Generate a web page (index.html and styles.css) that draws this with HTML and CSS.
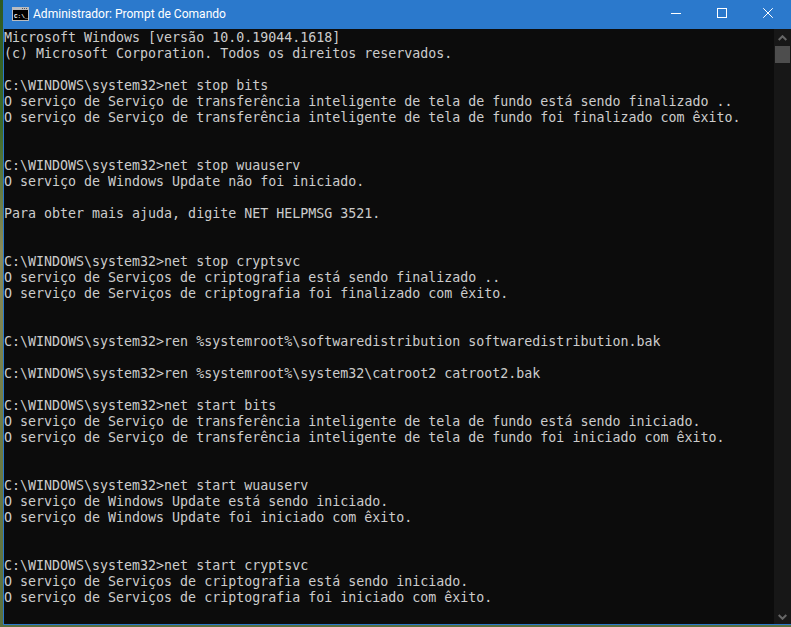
FILE: index.html
```html
<!DOCTYPE html>
<html lang="pt-BR">
<head>
<meta charset="utf-8">
<title>Administrador: Prompt de Comando</title>
<link rel="stylesheet" href="styles.css">
</head>
<body>
<div class="window">
  <header class="titlebar">
    <svg class="app-icon" width="17" height="14" viewBox="0 0 17 14">
      <rect x="0" y="0" width="17" height="14" fill="#b9bcc0"/>
      <rect x="1" y="3" width="15" height="10" fill="#000"/>
      <rect x="10" y="1" width="1" height="1" fill="#555"/>
      <rect x="12" y="1" width="1" height="1" fill="#555"/>
      <rect x="14" y="1" width="1" height="1" fill="#555"/>
      <text x="2" y="11" class="app-icon-text">C:\_</text>
    </svg>
    <span class="title">Administrador: Prompt de Comando</span>
    <div class="controls">
      <button class="control" aria-label="Minimizar">
        <svg width="10" height="10" viewBox="0 0 10 10"><path d="M0 5.5H10" stroke="#fff" fill="none"/></svg>
      </button>
      <button class="control" aria-label="Maximizar">
        <svg width="10" height="10" viewBox="0 0 10 10"><rect x=".5" y=".5" width="9" height="9" stroke="#fff" fill="none"/></svg>
      </button>
      <button class="control" aria-label="Fechar">
        <svg width="10" height="10" viewBox="0 0 10 10"><path d="M.2 .2L9.8 9.8M9.8 .2L.2 9.8" stroke="#fff" fill="none"/></svg>
      </button>
    </div>
  </header>
  <div class="body">
<pre class="console">Microsoft Windows [versão 10.0.19044.1618]
(c) Microsoft Corporation. Todos os direitos reservados.

C:\WINDOWS\system32&gt;net stop bits
O serviço de Serviço de transferência inteligente de tela de fundo está sendo finalizado ..
O serviço de Serviço de transferência inteligente de tela de fundo foi finalizado com êxito.


C:\WINDOWS\system32&gt;net stop wuauserv
O serviço de Windows Update não foi iniciado.

Para obter mais ajuda, digite NET HELPMSG 3521.


C:\WINDOWS\system32&gt;net stop cryptsvc
O serviço de Serviços de criptografia está sendo finalizado ..
O serviço de Serviços de criptografia foi finalizado com êxito.


C:\WINDOWS\system32&gt;ren %systemroot%\softwaredistribution softwaredistribution.bak

C:\WINDOWS\system32&gt;ren %systemroot%\system32\catroot2 catroot2.bak

C:\WINDOWS\system32&gt;net start bits
O serviço de Serviço de transferência inteligente de tela de fundo está sendo iniciado.
O serviço de Serviço de transferência inteligente de tela de fundo foi iniciado com êxito.


C:\WINDOWS\system32&gt;net start wuauserv
O serviço de Windows Update está sendo iniciado.
O serviço de Windows Update foi iniciado com êxito.


C:\WINDOWS\system32&gt;net start cryptsvc
O serviço de Serviços de criptografia está sendo iniciado.
O serviço de Serviços de criptografia foi iniciado com êxito.
</pre>
    <div class="scrollbar">
      <svg class="arrow" width="9" height="6" viewBox="0 0 9 6"><path d="M.7 5L4.5 1.2L8.3 5" stroke="#666" stroke-width="2" fill="none"/></svg>
      <div class="thumb"></div>
      <svg class="arrow arrow-down" width="9" height="6" viewBox="0 0 9 6"><path d="M.7 1L4.5 4.8L8.3 1" stroke="#666" stroke-width="2" fill="none"/></svg>
    </div>
  </div>
</div>
</body>
</html>
```
FILE: styles.css
```css
html, body {
  margin: 0;
  height: 100%;
}
body {
  overflow: hidden;
  background: linear-gradient(180deg, #2f5a22 0%, #3e6a2a 20%, #8a8a5a 40%, #6d7a45 70%, #5a7040 100%);
  padding: 0 0 2px 3px;
  box-sizing: border-box;
}
.window {
  height: 100%;
  display: flex;
  flex-direction: column;
  border-left: 1px solid #2b79cc;
  border-bottom: 1px solid #2b79cc;
  box-sizing: border-box;
}
.titlebar {
  flex: 0 0 29px;
  display: flex;
  align-items: center;
  background: #2b79cc;
  color: #fff;
  padding-left: 8px;
  margin-left: -1px;
}
.app-icon {
  margin: 0 0 1px 1px;
}
.app-icon-text {
  font: bold 6px "Liberation Mono", monospace;
  fill: #fff;
}
.title {
  margin-left: 4px;
  font: 12.05px Roboto, sans-serif;
  padding-bottom: 1px;
}
.controls {
  margin-left: auto;
  display: flex;
}
.control {
  width: 46px;
  height: 29px;
  padding: 0 0 3px;
  border: 0;
  background: none;
  display: flex;
  align-items: center;
  justify-content: center;
}
.body {
  flex: 1;
  min-height: 0;
  display: flex;
  background: #0c0c0c;
}
.console {
  flex: 1;
  margin: 0;
  padding-top: 1px;
  overflow: hidden;
  color: #cccccc;
  font: 13.3px/16px "DejaVu Sans Mono", monospace;
}
.scrollbar {
  flex: 0 0 17px;
  display: flex;
  flex-direction: column;
  align-items: center;
  background: #171717;
}
.arrow {
  margin-top: 6px;
}
.thumb {
  width: 15px;
  height: 17px;
  margin-top: 5px;
  background: #4d4d4d;
}
.arrow-down {
  margin-top: auto;
  margin-bottom: 4px;
}
```
